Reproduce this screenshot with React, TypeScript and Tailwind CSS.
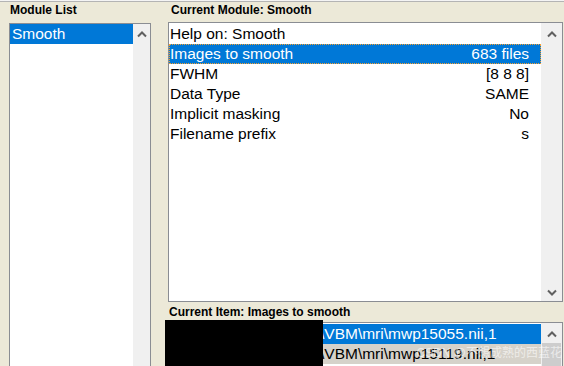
import React from "react";

const font = { fontFamily: '"Liberation Sans", Arial, sans-serif' };

function Chevron({ down = false }: { down?: boolean }) {
  return (
    <svg width="10" height="7" viewBox="0 0 10 7" className="block">
      <path
        d={down ? "M1 1.5 L5 5.5 L9 1.5" : "M1 5.5 L5 1.5 L9 5.5"}
        fill="none"
        stroke="#606060"
        strokeWidth="2"
      />
    </svg>
  );
}

const params = [
  { label: "Help on: Smooth", value: "" },
  { label: "Images to smooth", value: "683 files", selected: true },
  { label: "FWHM", value: "[8 8 8]" },
  { label: "Data Type", value: "SAME" },
  { label: "Implicit masking", value: "No" },
  { label: "Filename prefix", value: "s" },
];

export default function App() {
  return (
    <div
      className="relative w-[564px] h-[366px] overflow-hidden bg-[#ece9d8] text-black"
      style={font}
    >
      <div className="h-[1px] bg-[#f4f4f4]" />
      <div className="h-[1px] bg-[#b4b4b4]" />
      <div className="flex">
        {/* Module list */}
        <div className="ml-[9px] w-[142px] flex flex-col">
          <div className="h-[21px] pl-[1px] pt-[1px] text-[12px] font-bold leading-[14px]">
            Module List
          </div>
          <div className="flex h-[400px] border border-[#8a8d93] bg-white">
            <div className="flex-1">
              <div className="h-[20px] bg-[#0078d7] pl-[2px] text-[15.5px] leading-[20px] text-white">
                Smooth
              </div>
            </div>
            <div className="w-[17px] bg-[#f0f0f0] flex justify-center pt-[7px]">
              <Chevron />
            </div>
          </div>
        </div>

        {/* Current module */}
        <div className="ml-[17px] w-[395px] flex flex-col">
          <div className="h-[20px] pl-[3px] pt-[1px] text-[12px] font-bold leading-[14px]">
            Current Module: Smooth
          </div>
          <div className="flex h-[280px] border border-[#8a8d93] bg-white">
            <div className="flex-1 flex flex-col pt-[1px]">
              {params.map((p) => (
                <div
                  key={p.label}
                  className={
                    p.selected
                      ? "flex h-[20px] items-center justify-between border border-dotted border-[#f5a030] bg-[#0078d7] pl-[0px] pr-[11px] text-[15.5px] text-white"
                      : "flex h-[20px] items-center justify-between pl-[1px] pr-[12px] text-[15.5px]"
                  }
                >
                  <span>{p.label}</span>
                  <span>{p.value}</span>
                </div>
              ))}
            </div>
            <div className="w-[21px] bg-[#f0f0f0] flex flex-col items-center justify-between pt-[8px] pb-[5px]">
              <Chevron />
              <Chevron down />
            </div>
          </div>
          <div className="h-[20px] pl-[1px] pt-[3px] text-[12px] font-bold leading-[14px]">
            Current Item: Images to smooth
          </div>
          <div className="flex h-[60px] border border-[#8a8d93] bg-white">
            <div className="flex-1 flex flex-col pt-[1px]">
              <div className="h-[20px] bg-[#0078d7] pl-[151px] text-[15.5px] leading-[20px] text-white whitespace-nowrap">
                \VBM\mri\mwp15055.nii,1
              </div>
              <div className="h-[20px] bg-[#d6d2ca] pl-[151px] text-[15.5px] leading-[20px] whitespace-nowrap">
                \VBM\mri\mwp15119.nii,1
              </div>
            </div>
            <div className="w-[21px] bg-[#f0f0f0] flex flex-col items-center">
              <div className="h-[20px] pt-[8px]">
                <Chevron />
              </div>
              <div className="w-[19px] flex-1 bg-[#cdcdcd]" />
            </div>
          </div>
        </div>
      </div>

      {/* redaction */}
      <div className="absolute left-[165px] top-[320px] w-[158px] h-[46px] bg-black" />
      {/* watermark */}
      <div
        className="absolute right-[2px] top-[345px] text-[12px] leading-[16px] text-white/60 whitespace-nowrap"
        style={{ fontFamily: '"Liberation Sans", "Noto Sans CJK SC", sans-serif' }}
      >
        CSDN @不想成熟的西蓝花
      </div>
    </div>
  );
}
